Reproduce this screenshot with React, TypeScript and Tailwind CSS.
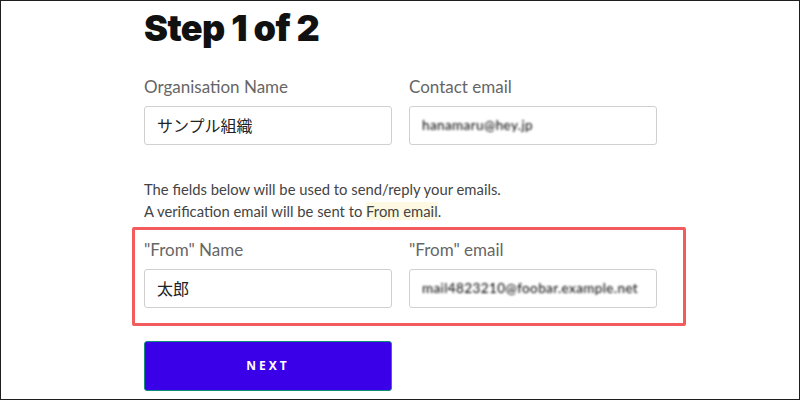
import React from 'react';

const labelCls = "block text-[17px] leading-[22px] text-[#666] font-['Lato','Noto_Sans',sans-serif]";
const inputCls =
  "w-[248px] h-[39px] rounded-[3px] border border-[#d0d0d0] bg-white px-3 text-[16px] text-[#222] outline-none font-['Lato','Noto_Sans_CJK_JP',sans-serif]";

const Field = ({ label, value, blurred }: { label: string; value: string; blurred?: boolean }) => (
  <div className="flex flex-col gap-[8px]">
    <span className={labelCls}>{label}</span>
    <div className={inputCls + " flex items-center overflow-hidden"}>
      <span
        className={
          blurred
            ? "inline-block whitespace-nowrap blur-[0.9px] text-[13.5px] tracking-[0.4px] text-[#000]"
            : "whitespace-nowrap"
        }
      >
        {value}
      </span>
    </div>
  </div>
);

const App = () => {
  return (
    <div className="w-[800px] h-[400px] overflow-hidden border border-[#1e1e1e] bg-white">
      <div className="pl-[143px] pt-[7px]">
        <h1 className="text-[36px] leading-[40px] font-black tracking-[-0.6px] text-[#111] font-['Inter',sans-serif]">
          Step 1 of 2
        </h1>

        <div className="mt-[28px] flex gap-[17px]">
          <Field label="Organisation Name" value="サンプル組織" />
          <Field label="Contact email" value="hanamaru@hey.jp" blurred />
        </div>

        <p className="mt-[33px] text-[14.8px] leading-[22px] text-[#444] font-['Lato','Noto_Sans',sans-serif]">
          The fields below will be used to send/reply your emails.
          <br />
          A verification email will be sent to <span className="bg-[#fdf8e1]">From email</span>.
        </p>

        <div className="mt-[5px] ml-[-12px] w-[554px] rounded-[2px] border-[3px] border-[#f25c5c] pl-[9px] pt-[9px] pb-[15px]">
          <div className="flex gap-[17px]">
            <Field label={'"From" Name'} value="太郎" />
            <Field label={'"From" email'} value="mail4823210@foobar.example.net" blurred />
          </div>
        </div>

        <button className="mt-[15px] w-[248px] h-[50px] rounded-[3px] border border-[#0f8f7a] bg-[#3a00e8] text-[12px] font-bold tracking-[3px] text-white font-['Noto_Sans',sans-serif]">
          NEXT
        </button>
      </div>
    </div>
  );
};

export default App;
